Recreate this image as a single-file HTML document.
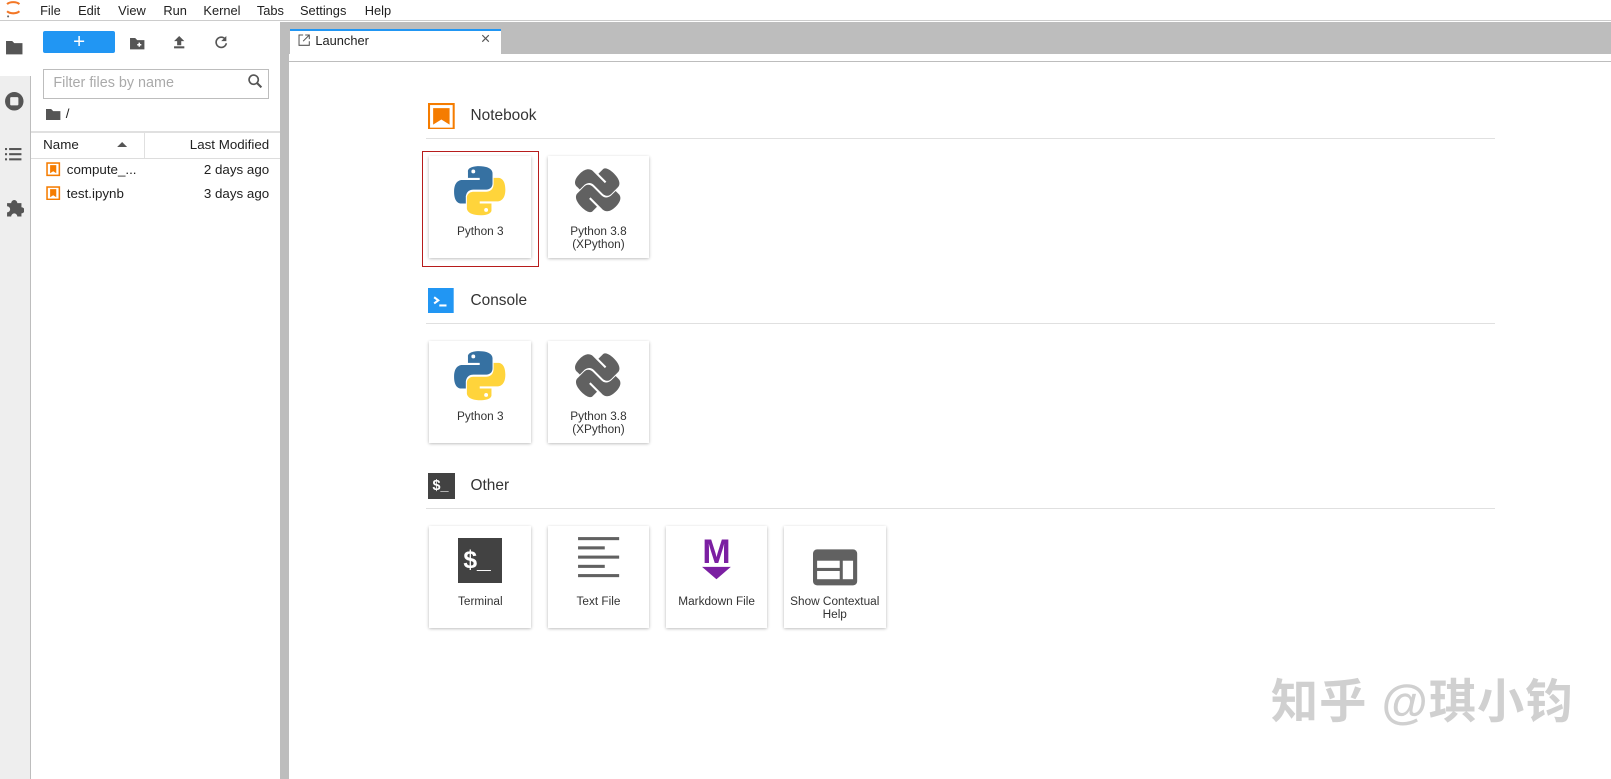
<!DOCTYPE html>
<html><head><meta charset="utf-8"><style>
*{box-sizing:border-box;margin:0;padding:0}
body{width:1611px;height:758px;overflow:hidden;background:#fff;font-family:"Liberation Sans",sans-serif;color:#212121;position:relative}
#w{position:absolute;left:0;top:0;width:1568px;height:738px;zoom:1.0274}
.abs{position:absolute}
.menu{top:0;left:0;width:1568px;height:20px;background:#fff;border-bottom:1px solid #ccc;font-size:12.5px}
.menu span{position:absolute;top:3px}
.side{top:21px;left:0;width:30px;height:737px;background:#eee;border-right:1px solid #bdbdbd}
.panel{top:21px;left:30px;width:243px;height:737px;background:#fff}
.split{top:21px;left:273px;width:8px;height:737px;background:#bdbdbd}
.tabbar{top:21px;left:281px;width:1330px;height:32px;background:#bdbdbd}
.card{position:absolute;width:99px;height:99px;background:#fff;box-shadow:0 1px 3px rgba(0,0,0,.3);font-size:11.5px;text-align:center;color:#333;line-height:13px}
.card svg{position:absolute;left:23px;top:8px}
.card .t{position:absolute;left:0;right:0;top:67px}
.head{position:absolute;left:458px;font-size:15px;color:#333}
.line{position:absolute;left:415px;width:1040px;height:1px;background:#e0e0e0}
</style></head><body><div id="w">
<div class="abs menu">
<svg class="abs" style="left:4px;top:0" width="18" height="18" viewBox="0 0 18 18"><path d="M3 4a7 4 0 0 1 12 0" fill="none" stroke="#f37726" stroke-width="2"/><path d="M3 11a7 4 0 0 0 12 0" fill="none" stroke="#f37726" stroke-width="2"/><circle cx="4" cy="16" r="1" fill="#666"/></svg>
<span style="left:39px">File</span><span style="left:76px">Edit</span><span style="left:115px">View</span><span style="left:159px">Run</span><span style="left:198px">Kernel</span><span style="left:250px">Tabs</span><span style="left:292px">Settings</span><span style="left:355px">Help</span>
</div>
<div class="abs side">
<div class="abs" style="left:0;top:0;width:30px;height:53px;background:#fff"></div>
<svg class="abs" style="left:5px;top:17px" width="18" height="16"><path d="M1 2h6l2 2h8v11H1z" fill="#555"/></svg>
<svg class="abs" style="left:4px;top:68px" width="20" height="20"><circle cx="10" cy="10" r="9" fill="#555"/><rect x="6" y="6" width="8" height="8" rx="1" fill="#eee"/></svg>
<svg class="abs" style="left:5px;top:122px" width="18" height="14" fill="#555"><rect x="0" y="1" width="2" height="2"/><rect x="4" y="1" width="12" height="2"/><rect x="0" y="6" width="2" height="2"/><rect x="4" y="6" width="12" height="2"/><rect x="0" y="11" width="2" height="2"/><rect x="4" y="11" width="12" height="2"/></svg>
<svg class="abs" style="left:5px;top:172px" width="18" height="18" fill="#555"><path d="M2 5h4a3 3 0 0 1 6 0h4v4a3 3 0 0 1 0 6v3H12a3 3 0 0 0-6 0H2v-4a3 3 0 0 0 0-6z"/></svg>
</div>
<div class="abs panel">
<div class="abs" style="left:12px;top:9px;width:70px;height:22px;background:#2196f3;border-radius:2px;color:#fff;font-size:20px;text-align:center;line-height:21px">+</div>
<svg class="abs" style="left:96px;top:14px" width="16" height="14"><path d="M1 2h5l2 2h7v9H1z" fill="#555"/><path d="M8 8.5h4M10 6.5v4" stroke="#fff" stroke-width="1.5"/></svg>
<svg class="abs" style="left:137px;top:13px" width="14" height="14" fill="#555"><path d="M7 1l5 5H9v4H5V6H2z"/><rect x="2" y="11" width="10" height="2"/></svg>
<svg class="abs" style="left:178px;top:13px" width="14" height="14"><path d="M11 4A5 5 0 1 0 12 8" fill="none" stroke="#555" stroke-width="1.6"/><path d="M12 1v5H7z" fill="#555"/></svg>
<div class="abs" style="left:12px;top:46px;width:220px;height:29px;border:1px solid #bdbdbd;font-size:14px;color:#aaa;padding:5px 0 0 9px">Filter files by name</div>
<svg class="abs" style="left:210px;top:50px" width="16" height="16"><circle cx="6.5" cy="6.5" r="4.5" fill="none" stroke="#555" stroke-width="1.6"/><path d="M10 10l4 4" stroke="#555" stroke-width="2"/></svg>
<svg class="abs" style="left:15px;top:84px" width="14" height="12"><path d="M0 1h5l2 2h7v9H0z" fill="#555"/></svg>
<span class="abs" style="left:34px;top:82px;font-size:13px">/</span>
<div class="abs" style="left:0;top:107px;width:243px;height:1px;background:#e0e0e0"></div>
<div class="abs" style="left:0;top:133px;width:243px;height:1px;background:#ddd"></div>
<div class="abs" style="left:110px;top:107px;width:1px;height:26px;background:#e0e0e0"></div>
<span class="abs" style="left:12px;top:112px;font-size:13px">Name</span>
<svg class="abs" style="left:84px;top:116px" width="10" height="6"><path d="M0 6L5 1 10 6z" fill="#555"/></svg>
<span class="abs" style="right:11px;top:112px;font-size:13px">Last Modified</span>
<svg class="abs" style="left:15px;top:137px" width="14" height="14"><rect x="1" y="1" width="12" height="12" fill="#fff" stroke="#f57c00" stroke-width="1.5"/><path d="M4 3h6v8l-3-2-3 2z" fill="#f57c00"/></svg>
<span class="abs" style="left:35px;top:137px;font-size:13px">compute_...</span><span class="abs" style="right:11px;top:137px;font-size:13px">2 days ago</span>
<svg class="abs" style="left:15px;top:160px" width="14" height="14"><rect x="1" y="1" width="12" height="12" fill="#fff" stroke="#f57c00" stroke-width="1.5"/><path d="M4 3h6v8l-3-2-3 2z" fill="#f57c00"/></svg>
<span class="abs" style="left:35px;top:160px;font-size:13px">test.ipynb</span><span class="abs" style="right:11px;top:160px;font-size:13px">3 days ago</span>
</div>
<div class="abs split"></div>
<div class="abs tabbar">
<div class="abs" style="left:1px;top:7px;width:206px;height:25px;background:#fff;border-top:2px solid #2196f3"></div>
<svg class="abs" style="left:9px;top:12px" width="12" height="12"><path d="M5 1H1v10h10V7" fill="none" stroke="#555"/><path d="M7 1h4v4M11 1L5 7" fill="none" stroke="#555"/></svg>
<span class="abs" style="left:26px;top:11px;font-size:12.5px">Launcher</span>
<span class="abs" style="left:187px;top:8px;font-size:16px;color:#555">×</span>
</div>
<div class="abs" style="left:281px;top:59px;width:1330px;height:1px;background:#bdbdbd"></div>

<svg class="abs" style="left:417px;top:100px" width="26" height="26"><rect x="1" y="1" width="24" height="24" fill="#fff" stroke="#f57c00" stroke-width="2"/><path d="M5 5h16v16l-8-5-8 5z" fill="#f57c00"/></svg>
<div class="head" style="top:104px">Notebook</div><div class="line" style="top:134px"></div>
<svg class="abs" style="left:417px;top:280px" width="25" height="25"><rect width="25" height="25" fill="#2196f3"/><path d="M6 9l4 3-4 3" fill="none" stroke="#fff" stroke-width="2"/><rect x="11" y="16" width="7" height="2" fill="#fff"/></svg>
<div class="head" style="top:284px">Console</div><div class="line" style="top:314px"></div>
<div class="abs" style="left:417px;top:460px;width:26px;height:26px;background:#424242;color:#fff;font-size:14px;font-weight:bold;padding:5px 0 0 4px">$_</div>
<div class="head" style="top:464px">Other</div><div class="line" style="top:494px"></div>

<div class="abs" style="left:411px;top:147px;width:114px;height:113px;border:1px solid #b71c1c"></div>

<svg width="0" height="0" style="position:absolute"><defs>
<path id="py" d="M25 2c-12 0-11 5-11 5v6h11v2H9c0 0-8-1-8 11s7 11 7 11h4v-6c0 0 0-7 7-7h12c0 0 6 0 6-6V9c0 0 1-7-13-7z"/>
</defs></svg>

<div class="card" style="left:418px;top:152px"><svg width="52" height="52" viewBox="0 0 50 50"><use href="#py" fill="#3671a2"/><use href="#py" fill="#ffd43b" transform="rotate(180 25 25)"/><circle cx="19" cy="7" r="1.8" fill="#fff"/><circle cx="31" cy="43" r="1.8" fill="#fff"/></svg><div class="t">Python 3</div></div>
<div class="card" style="left:533px;top:152px"><svg width="52" height="52" viewBox="0 0 50 50"><g transform="rotate(45 25 25) scale(.95) translate(1 1)"><use href="#py" fill="#616161"/><use href="#py" fill="#616161" transform="rotate(180 25 25)"/></g></svg><div class="t">Python 3.8<br>(XPython)</div></div>
<div class="card" style="left:418px;top:332px"><svg width="52" height="52" viewBox="0 0 50 50"><use href="#py" fill="#3671a2"/><use href="#py" fill="#ffd43b" transform="rotate(180 25 25)"/><circle cx="19" cy="7" r="1.8" fill="#fff"/><circle cx="31" cy="43" r="1.8" fill="#fff"/></svg><div class="t">Python 3</div></div>
<div class="card" style="left:533px;top:332px"><svg width="52" height="52" viewBox="0 0 50 50"><g transform="rotate(45 25 25) scale(.95) translate(1 1)"><use href="#py" fill="#616161"/><use href="#py" fill="#616161" transform="rotate(180 25 25)"/></g></svg><div class="t">Python 3.8<br>(XPython)</div></div>

<div class="card" style="left:418px;top:512px"><div class="abs" style="left:28px;top:12px;width:43px;height:43px;background:#424242;color:#fff;font-size:24px;font-weight:bold;text-align:left;padding:11px 0 0 5px;line-height:22px">$_</div><div class="t">Terminal</div></div>
<div class="card" style="left:533px;top:512px"><svg width="52" height="52" style="left:28px" fill="#616161"><rect x="2" y="3" width="40" height="3"/><rect x="2" y="12" width="26" height="3"/><rect x="2" y="21" width="40" height="3"/><rect x="2" y="30" width="26" height="3"/><rect x="2" y="39" width="40" height="3"/></svg><div class="t">Text File</div></div>
<div class="card" style="left:648px;top:512px"><svg width="52" height="52" style="left:33px"><text x="16" y="28" text-anchor="middle" font-family="Liberation Sans" font-weight="bold" font-size="33" fill="#7b1fa2">M</text><path d="M2 32h28L16 44z" fill="#7b1fa2"/></svg><div class="t">Markdown File</div></div>
<div class="card" style="left:763px;top:512px"><svg width="52" height="52" style="left:28px"><rect x="0" y="17" width="43" height="35" rx="4" fill="#616161" transform="translate(0 -2)"/><rect x="4" y="26" width="22" height="7" fill="#fff"/><rect x="4" y="36" width="22" height="8" fill="#fff"/><rect x="29" y="26" width="10" height="18" fill="#fff"/></svg><div class="t">Show Contextual<br>Help</div></div>

<div class="abs" style="left:1237px;top:645px;font-family:'Liberation Sans','Noto Sans CJK SC',sans-serif;font-size:46px;font-weight:bold;color:#d0d0d0;letter-spacing:1px;white-space:nowrap">知乎 @琪小钧</div>
</div></body></html>
